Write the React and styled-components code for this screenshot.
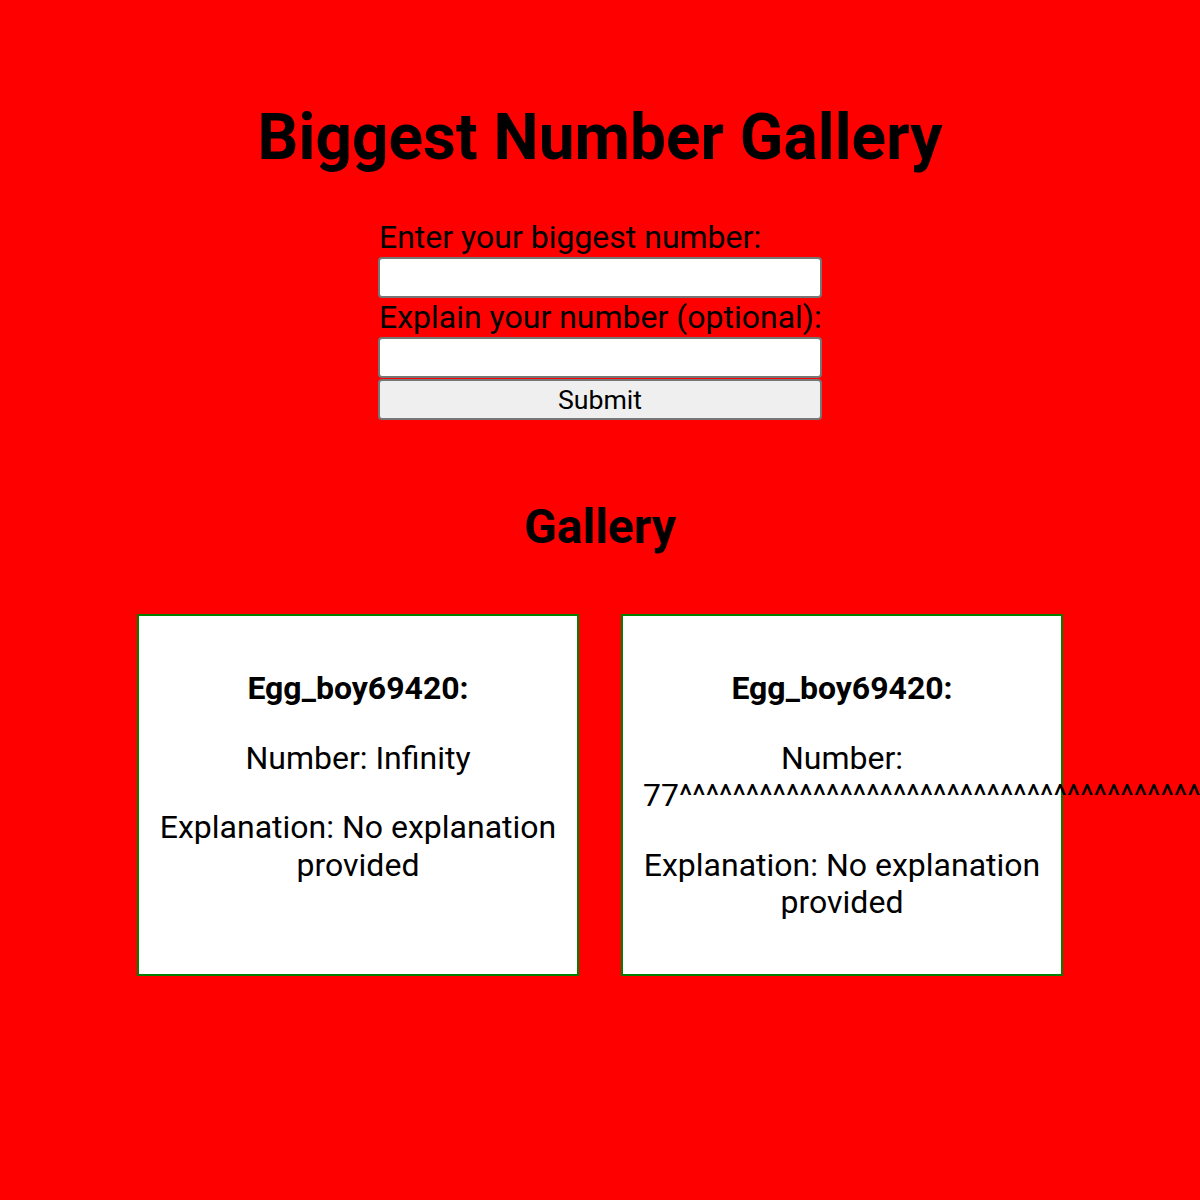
import React, { useState } from 'react';
import styled, { createGlobalStyle } from 'styled-components';

const GlobalStyle = createGlobalStyle`
  html, body {
    margin: 0;
    padding: 0;
    overflow-x: hidden;
  }
  body {
    background: #ff0000;
    font-family: Roboto, "Liberation Sans", sans-serif;
    color: #000;
  }
`;

const Page = styled.div`
  min-height: 1200px;
  background: #ff0000;
  display: flex;
  flex-direction: column;
  align-items: center;
`;

const Title = styled.h1`
  margin: 100px 0 43px;
  font-size: 64px;
  font-weight: 700;
  line-height: 75px;
  text-align: center;
`;

const Form = styled.form`
  width: 444px;
  display: flex;
  flex-direction: column;
`;

const Label = styled.label`
  font-size: 32px;
  line-height: 39px;
  white-space: nowrap;
  padding-left: 1px;
`;

const Input = styled.input`
  box-sizing: border-box;
  height: 41px;
  width: 100%;
  margin: 0;
  border: 2px solid #767676;
  border-radius: 4px;
  background: #fff;
  font-size: 26px;
  font-family: inherit;
  padding: 0 6px;
  outline: none;
`;

const Button = styled.button`
  box-sizing: border-box;
  height: 41px;
  width: 100%;
  margin: 1px 0 0;
  border: 2px solid #767676;
  border-radius: 4px;
  background: #efefef;
  font-family: inherit;
  font-size: 26.67px;
  color: #000;
  cursor: pointer;
`;

const SectionTitle = styled.h2`
  margin: 79px 0 59px;
  font-size: 48px;
  font-weight: 700;
  line-height: 56px;
  text-align: center;
`;

const CardRow = styled.div`
  display: flex;
  justify-content: center;
  gap: 42px;
`;

const Card = styled.div`
  box-sizing: border-box;
  width: 442px;
  height: 362px;
  padding: 22px 20px 0;
  border: 2px solid #008000;
  background: #fff;
  text-align: center;
`;

const CardText = styled.p`
  margin: 32px 0;
  font-size: 32px;
  line-height: 37.5px;
  font-weight: ${(p) => (p.$bold ? 700 : 400)};
`;

export default function App() {
  const [number, setNumber] = useState('');
  const [explanation, setExplanation] = useState('');
  const [entries, setEntries] = useState([
    { id: 1, name: 'Egg_boy69420', number: 'Infinity', explanation: '' },
    {
      id: 2,
      name: 'Egg_boy69420',
      number: '77' + '^'.repeat(70) + '77',
      explanation: '',
    },
  ]);

  const handleSubmit = (e) => {
    e.preventDefault();
    if (!number) return;
    setEntries([
      ...entries,
      { id: entries.length + 1, name: 'Egg_boy69420', number, explanation },
    ]);
    setNumber('');
    setExplanation('');
  };

  return (
    <Page>
      <GlobalStyle />
      <Title>Biggest Number Gallery</Title>
      <Form onSubmit={handleSubmit}>
        <Label htmlFor="number">Enter your biggest number:</Label>
        <Input id="number" value={number} onChange={(e) => setNumber(e.target.value)} />
        <Label htmlFor="explanation">Explain your number (optional):</Label>
        <Input
          id="explanation"
          value={explanation}
          onChange={(e) => setExplanation(e.target.value)}
        />
        <Button type="submit">Submit</Button>
      </Form>
      <SectionTitle>Gallery</SectionTitle>
      <CardRow>
        {entries.map((entry) => (
          <Card key={entry.id}>
            <CardText $bold>{entry.name}:</CardText>
            <CardText>Number: {entry.number}</CardText>
            <CardText>
              Explanation: {entry.explanation || 'No explanation provided'}
            </CardText>
          </Card>
        ))}
      </CardRow>
    </Page>
  );
}
